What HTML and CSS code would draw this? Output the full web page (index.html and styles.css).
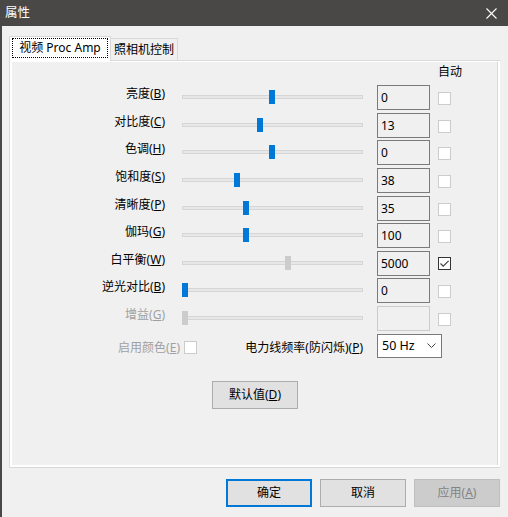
FILE: index.html
```html
<!DOCTYPE html>
<html lang="zh">
<head>
<meta charset="utf-8">
<title>属性</title>
<link rel="stylesheet" href="styles.css">
</head>
<body>
<div class="titlebar">
  <span class="title">属性</span>
  <svg class="close" width="11" height="11" viewBox="0 0 11 11"><path d="M0.5 0.5 L10.5 10.5 M10.5 0.5 L0.5 10.5" stroke="#fff" stroke-width="1.1" fill="none"/></svg>
</div>
<div class="frame">
  <div class="tabs">
    <div class="tab active"><span class="focus">视频 Proc Amp</span></div>
    <div class="tab">照相机控制</div>
  </div>
  <div class="pane">
    <div class="page">
      <div class="auto-head">自动</div>
      <div class="rows">
        <div class="row"><div class="label">亮度(<u>B</u>)</div><div class="slider"><div class="track"></div><div class="thumb" style="left:87px"></div></div><div class="box">0</div><div class="cb"></div></div>
        <div class="row"><div class="label">对比度(<u>C</u>)</div><div class="slider"><div class="track"></div><div class="thumb" style="left:75px"></div></div><div class="box">13</div><div class="cb"></div></div>
        <div class="row"><div class="label">色调(<u>H</u>)</div><div class="slider"><div class="track"></div><div class="thumb" style="left:87px"></div></div><div class="box">0</div><div class="cb"></div></div>
        <div class="row"><div class="label">饱和度(<u>S</u>)</div><div class="slider"><div class="track"></div><div class="thumb" style="left:52px"></div></div><div class="box">38</div><div class="cb"></div></div>
        <div class="row"><div class="label">清晰度(<u>P</u>)</div><div class="slider"><div class="track"></div><div class="thumb" style="left:61px"></div></div><div class="box">35</div><div class="cb"></div></div>
        <div class="row"><div class="label">伽玛(<u>G</u>)</div><div class="slider"><div class="track"></div><div class="thumb" style="left:61px"></div></div><div class="box">100</div><div class="cb"></div></div>
        <div class="row"><div class="label">白平衡(<u>W</u>)</div><div class="slider"><div class="track"></div><div class="thumb off" style="left:103px"></div></div><div class="box">5000</div><div class="cb checked"><svg width="11" height="11" viewBox="0 0 11 11"><path d="M1.5 5.5 L4.2 8.2 L9.6 2.8" stroke="#444" stroke-width="1.2" fill="none"/></svg></div></div>
        <div class="row"><div class="label">逆光对比(<u>B</u>)</div><div class="slider"><div class="track"></div><div class="thumb" style="left:0px"></div></div><div class="box">0</div><div class="cb"></div></div>
        <div class="row disabled"><div class="label">增益(<u>G</u>)</div><div class="slider"><div class="track"></div><div class="thumb off" style="left:0px"></div></div><div class="box off"></div><div class="cb"></div></div>
      </div>
      <div class="extra">
        <div class="l1">启用颜色(<u>E</u>)</div>
        <div class="cb"></div>
        <div class="l2">电力线频率(防闪烁)(<u>P</u>)</div>
        <div class="select"><span>50 Hz</span><svg width="9" height="5" viewBox="0 0 9 5"><path d="M0.5 0.5 L4.5 4.5 L8.5 0.5" stroke="#444" stroke-width="1" fill="none"/></svg></div>
      </div>
      <div class="default-row"><button class="btn">默认值(<u>D</u>)</button></div>
    </div>
  </div>
  <div class="footer">
    <button class="btn primary">确定</button>
    <button class="btn">取消</button>
    <button class="btn disabled-btn">应用(<u>A</u>)</button>
  </div>
</div>
</body>
</html>
```

FILE: styles.css
```css
* { box-sizing: border-box; }
html, body {
  margin: 0;
  padding: 0;
}
body {
  width: 508px;
  height: 517px;
  overflow: hidden;
  background: #f0f0f0;
  color: #000;
  font: 12px/18px "Noto Sans", "Noto Sans CJK SC", sans-serif;
}
u { text-underline-offset: 1px; }

.titlebar {
  height: 26px;
  background: #4a4846;
  display: flex;
  align-items: center;
  justify-content: space-between;
  padding: 0 11px 0 5px;
  color: #fff;
}
.title { font-size: 12.5px; }
.close { display: block; }

.frame {
  border-left: 2px solid #4a4846;
  height: 491px;
  padding: 10px 8px 0 7px;
}

.tabs {
  display: flex;
  align-items: flex-end;
  height: 24px;
  position: relative;
  z-index: 1;
}
.tab {
  height: 22px;
  width: 67px;
  border-top: 1px solid #d9d9d9;
  border-right: 1px solid #d9d9d9;
  background: #f0f0f0;
  text-align: center;
  line-height: 20px;
  padding-top: 1px;
}
.tab.active {
  width: 102px;
  height: 25px;
  border: 1px solid #d9d9d9;
  border-bottom: none;
  background: #fff;
  padding: 1px 2px 0;
  margin-bottom: -1px;
}
.focus {
  display: block;
  height: 20px;
  border: 1px dotted #000;
  line-height: 18px;
  text-align: center;
}

.pane {
  height: 408px;
  border: 1px solid #d9d9d9;
  border-right: none;
  background: #fff;
  padding: 1px 2px 2px 2px;
}
.page {
  height: 403px;
  background: #f0f0f0;
  border-right: 1px solid #d9d9d9;
}

.auto-head {
  height: 23px;
  padding: 1px 0 0 426px;
}

.rows {
  display: grid;
  grid-auto-rows: 27.625px;
}
.row {
  display: flex;
  align-items: flex-start;
}
.label {
  width: 153px;
  text-align: right;
  white-space: nowrap;
}
.slider {
  position: relative;
  margin-left: 17px;
  width: 181px;
  height: 25px;
}
.track {
  margin-top: 10px;
  height: 4px;
  background: #e7e7e7;
  border: 1px solid #d6d6d6;
}
.thumb {
  position: absolute;
  top: 5px;
  width: 6px;
  height: 14px;
  background: #0078d7;
}
.thumb.off { background: #cccccc; }
.box {
  margin-left: 14px;
  width: 53px;
  height: 25px;
  border: 1px solid #7a7a7a;
  padding-left: 3px;
  line-height: 23px;
}
.box.off { border-color: #cccccc; }
.cb {
  margin-left: 8px;
  margin-top: 7px;
  width: 13px;
  height: 13px;
  border: 1px solid #cccccc;
  background: #fff;
  flex: none;
}
.cb.checked {
  border-color: #333333;
  margin-top: 6px;
}
.cb svg { display: block; }
.disabled .label { color: #a0a0a0; }

.extra {
  display: flex;
  align-items: flex-start;
  height: 24px;
}
.l1 {
  width: 168px;
  text-align: right;
  color: #a0a0a0;
  margin-top: 5px;
}
.extra .cb {
  margin-left: 4px;
  margin-top: 7px;
}
.l2 {
  width: 166px;
  text-align: right;
  margin-top: 5px;
  white-space: nowrap;
}
.select {
  margin-left: 14px;
  width: 65px;
  height: 24px;
  border: 1px solid #7a7a7a;
  background: #fff;
  display: flex;
  align-items: center;
  justify-content: space-between;
  padding: 0 5px 0 4px;
}
.select span { font-size: 12.5px; }
.select svg { display: block; }

.default-row {
  margin-top: 23px;
  padding-left: 200px;
}

.btn {
  width: 86px;
  height: 28px;
  padding: 0;
  margin: 0;
  border: 1px solid #adadad;
  background: #e1e1e1;
  color: #000;
  font: 12px/18px "Noto Sans", "Noto Sans CJK SC", sans-serif;
}
.btn.primary { border: 2px solid #0078d7; }
.btn.disabled-btn {
  background: #cccccc;
  border-color: #bfbfbf;
  color: #838383;
}

.footer {
  display: flex;
  justify-content: flex-end;
  gap: 8px;
  margin-top: 11px;
}
```
